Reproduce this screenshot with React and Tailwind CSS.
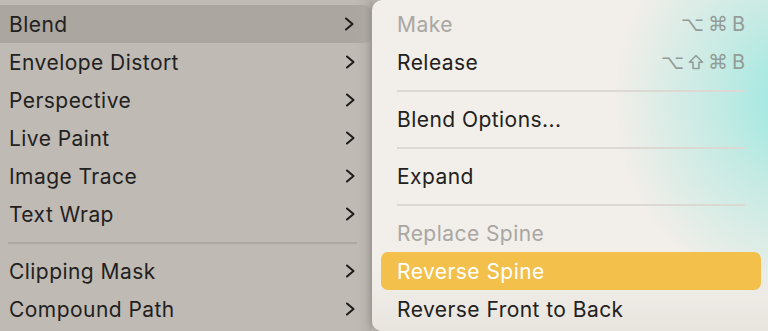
import React from 'react';

const font = { fontFamily: 'Inter, "Liberation Sans", sans-serif' };

const leftItems = [
  { label: 'Blend', active: true },
  { label: 'Envelope Distort' },
  { label: 'Perspective' },
  { label: 'Live Paint' },
  { label: 'Image Trace' },
  { label: 'Text Wrap' },
  { sep: true },
  { label: 'Clipping Mask' },
  { label: 'Compound Path' },
];

const rightItems = [
  { label: 'Make', disabled: true, keys: ['opt', 'cmd', 'B'] },
  { label: 'Release', keys: ['opt', 'shift', 'cmd', 'B'] },
  { sep: true },
  { label: 'Blend Options...' },
  { sep: true },
  { label: 'Expand' },
  { sep: true },
  { label: 'Replace Spine', disabled: true },
  { label: 'Reverse Spine', active: true },
  { label: 'Reverse Front to Back' },
];

function Chevron() {
  return (
    <svg width="12" height="14" viewBox="0 0 12 14" className="text-[#1f1d1b]">
      <polyline points="3,1.5 9.5,7 3,12.5" fill="none" stroke="currentColor" strokeWidth="2.1" strokeLinecap="round" strokeLinejoin="round" />
    </svg>
  );
}

function Key({ k }) {
  if (k === 'shift') {
    return (
      <svg width="16" height="16" viewBox="0 0 16 16">
        <path d="M8 1.5 L14.5 8.2 L11 8.2 L11 14.5 L5 14.5 L5 8.2 L1.5 8.2 Z" fill="none" stroke="currentColor" strokeWidth="1.6" strokeLinejoin="round" />
      </svg>
    );
  }
  if (k === 'opt') return <span>⌥</span>;
  if (k === 'cmd') return <span>⌘</span>;
  return <span style={font}>{k}</span>;
}

export default function App() {
  return (
    <div className="flex w-[768px] h-[331px] overflow-hidden bg-[#bfbab4] text-[21px] tracking-[0.45px]" style={font}>
      {/* main menu */}
      <div className="relative w-[372px] shrink-0 pt-[5px] bg-[#bfbab4]">
        {leftItems.map((it, i) =>
          it.sep ? (
            <div key={i} className="h-[19px] flex items-center pl-[8px] pr-[15px]">
              <div className="h-[2px] w-full bg-[#aca7a1]" />
            </div>
          ) : (
            <div
              key={i}
              className={`h-[38px] flex items-center justify-between pl-[9px] pr-[16px] text-[#222120] ${it.active ? 'bg-[#aba69f] rounded-r-[6px] mr-[1px]' : ''}`}
            >
              <span className="pt-[1px]">{it.label}</span>
              <Chevron />
            </div>
          )
        )}
        <div className="absolute top-0 right-0 w-[16px] h-full bg-gradient-to-r from-transparent to-[#b0aba5]/70 pointer-events-none" />
      </div>

      {/* submenu */}
      <div className="relative flex-1 h-[331px] rounded-tl-[10px] rounded-bl-[10px] bg-[#f2eee9] pt-[5px] pl-[9px] pr-[7px] shadow-[-2px_0_6px_rgba(0,0,0,0.18)] overflow-hidden">
        <div
          className="absolute inset-0 pointer-events-none"
          style={{ background: 'radial-gradient(ellipse 185px 200px at 800px 100px, rgba(145,232,224,0.95) 0%, rgba(165,232,224,0.6) 45%, rgba(242,238,233,0) 100%)', left: '-372px' }}
        />
        <div className="absolute inset-x-0 bottom-0 h-[60px] bg-gradient-to-b from-transparent to-[#e4e0da]/70 pointer-events-none" />
        <div className="relative">
          {rightItems.map((it, i) =>
            it.sep ? (
              <div key={i} className="h-[19px] flex items-center px-[16px]">
                <div className="h-[2px] w-full bg-[#dcd8d3]" />
              </div>
            ) : (
              <div
                key={i}
                className={`h-[38px] flex items-center justify-between px-[16px] rounded-[7px] ${it.active ? 'bg-[#f2c04b] text-white' : it.disabled ? 'text-[#a9a7a3]' : 'text-[#222120]'}`}
              >
                <span className="pt-[1px]">{it.label}</span>
                {it.keys && (
                  <span className="flex items-center gap-[4px] text-[#939c97] text-[20px] tracking-normal" style={{ fontFamily: '"DejaVu Sans", sans-serif' }}>
                    {it.keys.map((k, j) => (
                      <Key key={j} k={k} />
                    ))}
                  </span>
                )}
              </div>
            )
          )}
        </div>
      </div>
    </div>
  );
}
